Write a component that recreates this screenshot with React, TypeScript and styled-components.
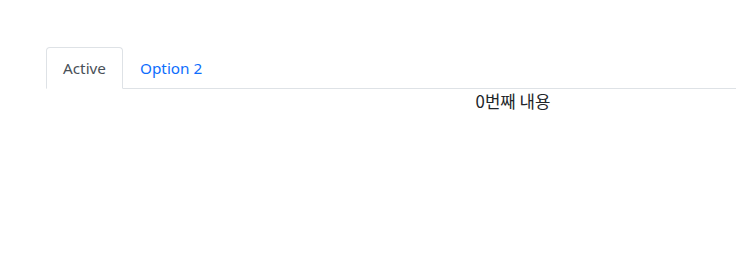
import styled, { createGlobalStyle } from 'styled-components';

const GlobalStyle = createGlobalStyle`
  html, body {
    margin: 0;
    padding: 0;
    background: #fff;
    overflow: hidden;
  }
  body {
    font-family: "Segoe UI", "Noto Sans", "Noto Sans CJK KR", sans-serif;
    font-size: 15.3px;
    color: #212529;
  }
`;

const Page = styled.div`
  padding: 47px 0 0 46px;
`;

const Tabs = styled.div`
  width: 100%;
`;

const TabList = styled.ul`
  display: flex;
  list-style: none;
  margin: 0;
  padding: 0;
  border-bottom: 1px solid #dee2e6;
`;

const TabItem = styled.li`
  margin-bottom: -1px;
`;

const TabLink = styled.a<{ $active?: boolean }>`
  display: block;
  padding: 8px 16px;
  line-height: 24px;
  border: 1px solid transparent;
  border-color: ${p => (p.$active ? '#dee2e6 #dee2e6 #fff' : 'transparent')};
  border-top-left-radius: 4px;
  border-top-right-radius: 4px;
  background: ${p => (p.$active ? '#fff' : 'transparent')};
  color: ${p => (p.$active ? '#495057' : '#0d6efd')};
  text-decoration: none;
  cursor: pointer;
`;

const TabContent = styled.div`
  padding-left: 244px;
  text-align: center;
  font-size: 16.8px;
  line-height: 24px;
  font-family: "Noto Sans CJK KR", "Noto Sans", sans-serif;
`;

export default function App() {
  const tabs = ['Active', 'Option 2'];
  const active = 0;
  return (
    <>
      <GlobalStyle />
      <Page>
        <Tabs>
          <TabList>
            {tabs.map((t, i) => (
              <TabItem key={t}>
                <TabLink $active={i === active}>{t}</TabLink>
              </TabItem>
            ))}
          </TabList>
          <TabContent>{active}번째 내용</TabContent>
        </Tabs>
      </Page>
    </>
  );
}
